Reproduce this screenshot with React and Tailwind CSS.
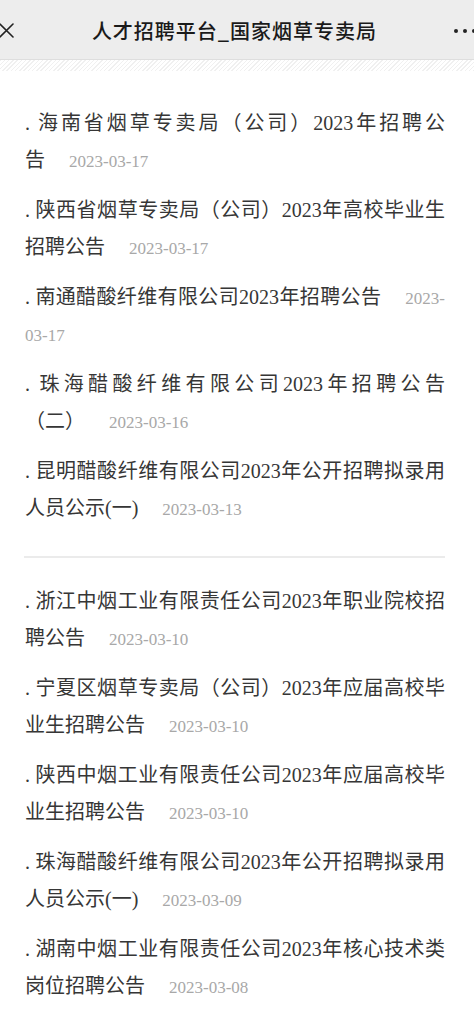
import React from 'react';

const groups = [
    [
        { id: 1, title: '海南省烟草专卖局（公司）2023年招聘公', tail: '告', date: '2023-03-17' },
        { id: 2, title: '陕西省烟草专卖局（公司）2023年高校毕业生招聘公告', date: '2023-03-17' },
        { id: 3, title: '南通醋酸纤维有限公司2023年招聘公告', date: '2023-03-17', split: true },
        { id: 4, title: '珠海醋酸纤维有限公司2023年招聘公告', tail: '（二）', date: '2023-03-16' },
        { id: 5, title: '昆明醋酸纤维有限公司2023年公开招聘拟录用人员公示(一)', date: '2023-03-13' },
    ],
    [
        { id: 6, title: '浙江中烟工业有限责任公司2023年职业院校招聘公告', date: '2023-03-10' },
        { id: 7, title: '宁夏区烟草专卖局（公司）2023年应届高校毕业生招聘公告', date: '2023-03-10' },
        { id: 8, title: '陕西中烟工业有限责任公司2023年应届高校毕业生招聘公告', date: '2023-03-10' },
        { id: 9, title: '珠海醋酸纤维有限公司2023年公开招聘拟录用人员公示(一)', date: '2023-03-09' },
        { id: 10, title: '湖南中烟工业有限责任公司2023年核心技术类岗位招聘公告', date: '2023-03-08' },
    ],
];

const DateText = ({ date, split }) => (
    <span className="ml-[24px] text-[17px] leading-[20px] text-[#a8a8a8]">
        {split ? (
            <>
                {date.slice(0, 5)}
                <wbr />
                {date.slice(5)}
            </>
        ) : (
            date
        )}
    </span>
);

const NewsItem = ({ item, last }) => (
    <p className={`text-justify [text-spacing-trim:space-all] text-[20px] leading-[36.5px] text-[#363636] ${last ? '' : 'mb-[14px]'}`}>
        . {item.title}
        {item.tail ? (
            <span className="whitespace-nowrap">
                {item.tail}
                <DateText date={item.date} />
            </span>
        ) : (
            <DateText date={item.date} split={item.split} />
        )}
    </p>
);

const App = () => {
    return (
        <div
            className="min-h-screen bg-white"
            style={{ fontFamily: '"Liberation Serif", "Noto Sans CJK SC", serif' }}
        >
            {/* top bar */}
            <div className="flex items-center justify-between h-[60px] bg-[#ededed] border-b border-[#dedede] font-['Noto_Sans_CJK_SC',sans-serif]">
                <svg width="17" height="17" viewBox="0 0 17 17" className="-ml-[2px] mt-[1px]">
                    <path d="M2 2 L15 15 M15 2 L2 15" stroke="#222222" strokeWidth="1.6" strokeLinecap="round" fill="none" />
                </svg>
                <div className="text-[20px] font-medium tracking-[1px] text-[#1a1a1a] mt-[2px]">人才招聘平台_国家烟草专卖局</div>
                <div className="flex gap-[5px] -mr-[2px] mt-[2px]">
                    <span className="w-[4px] h-[4px] rounded-full bg-[#222222]" />
                    <span className="w-[4px] h-[4px] rounded-full bg-[#222222]" />
                    <span className="w-[4px] h-[4px] rounded-full bg-[#222222]" />
                </div>
            </div>
            <div className="h-[11px] bg-[repeating-linear-gradient(135deg,#f0f0f0_0px,#f0f0f0_1px,#ffffff_1px,#ffffff_3px)]" />

            {/* list */}
            <div className="pt-[34px] pl-[25px] pr-[29px]">
                {groups.map((group, gi) => (
                    <div key={gi}>
                        {gi > 0 && <div className="mt-[30px] mb-[25px] h-[2px] bg-[#ebebeb] -ml-[1px]" />}
                        {group.map((item, i) => (
                            <NewsItem key={item.id} item={item} last={i === group.length - 1} />
                        ))}
                    </div>
                ))}
            </div>
        </div>
    );
};

export default App;
